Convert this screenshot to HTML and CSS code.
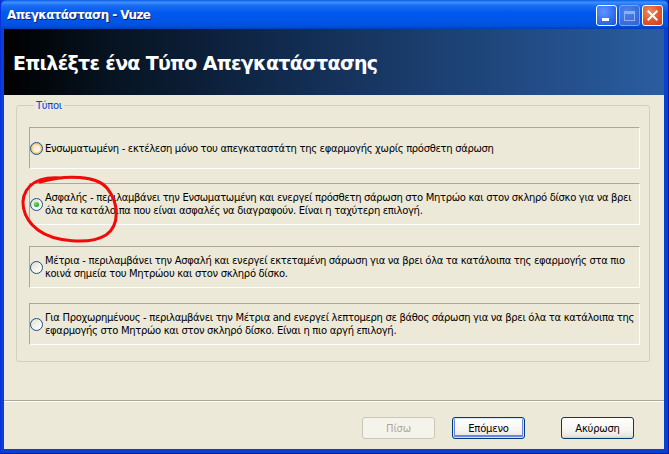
FILE: index.html
```html
<!DOCTYPE html>
<html>
<head>
<meta charset="utf-8">
<link rel="stylesheet" href="styles.css">
</head>
<body>
<div class="window">
  <div class="titlebar">
    <span class="title">Απεγκατάσταση - Vuze</span>
    <div class="tb-buttons">
      <div class="tb-btn tb-min"><span class="min-bar"></span></div>
      <div class="tb-btn tb-max"><span class="max-box"></span></div>
      <div class="tb-btn tb-close">
        <svg width="21" height="21" viewBox="0 0 21 21"><path d="M6 6 L15 15 M15 6 L6 15" stroke="#fff" stroke-width="2.2" stroke-linecap="square"/></svg>
      </div>
    </div>
  </div>
  <div class="client">
    <div class="header">
      <h1 class="header-title">Επιλέξτε ένα Τύπο Απεγκατάστασης</h1>
    </div>
    <div class="content">
      <fieldset class="group">
        <legend class="legend">Τύποι</legend>
        <div class="option opt1">
          <span class="radio hover"></span>
          <span class="opt-text">Ενσωματωμένη - εκτέλεση μόνο του απεγκαταστάτη της εφαρμογής χωρίς πρόσθετη σάρωση</span>
        </div>
        <div class="option opt2">
          <span class="radio checked"><span class="dot"></span></span>
          <span class="opt-text">Ασφαλής - περιλαμβάνει την Ενσωματωμένη και ενεργεί πρόσθετη σάρωση στο Μητρώο και στον σκληρό δίσκο για να βρει<br>όλα τα κατάλοιπα που είναι ασφαλές να διαγραφούν. Είναι η ταχύτερη επιλογή.</span>
        </div>
        <div class="option opt3">
          <span class="radio"></span>
          <span class="opt-text">Μέτρια - περιλαμβάνει την Ασφαλή και ενεργεί εκτεταμένη σάρωση για να βρει όλα τα κατάλοιπα της εφαρμογής στα πιο<br>κοινά σημεία του Μητρώου και στον σκληρό δίσκο.</span>
        </div>
        <div class="option opt4">
          <span class="radio"></span>
          <span class="opt-text">Για Προχωρημένους - περιλαμβάνει την Μέτρια and ενεργεί λεπτομερη σε βάθος σάρωση για να βρει όλα τα κατάλοιπα της<br>εφαρμογής στο Μητρώο και στον σκληρό δίσκο. Είναι η πιο αργή επιλογή.</span>
        </div>
      </fieldset>
      <div class="separator"></div>
      <div class="buttons">
        <button class="btn disabled">Πίσω</button>
        <button class="btn default">Επόμενο</button>
        <button class="btn cancel">Ακύρωση</button>
      </div>
    </div>
  </div>
  <svg class="annotation" width="140" height="80" viewBox="0 0 140 80">
    <path d="M 38 12 C 65 4, 95 6, 105 18 C 117 33, 118 55, 104 65 C 88 75, 52 72, 36 60 C 20 48, 16 28, 28 16 C 36 8, 48 7, 60 8" fill="none" stroke="#f00a0a" stroke-width="3" stroke-linecap="round"/>
  </svg>
</div>
</body>
</html>
```

FILE: styles.css
```css
* { box-sizing: border-box; }
html, body { margin: 0; padding: 0; }
body {
  width: 669px;
  height: 454px;
  overflow: hidden;
  font-family: "DejaVu Sans", Verdana, sans-serif;
  font-size: 10px;
}
.window {
  position: relative;
  width: 669px;
  height: 454px;
  background: #0a3fd0;
  display: flex;
  flex-direction: column;
  border-left: 1px solid #0831d9;
  border-right: 1px solid #001ea0;
  border-bottom: 1px solid #001ea0;
}
.titlebar {
  height: 29px;
  flex: 0 0 29px;
  background: linear-gradient(to bottom, #0a5ee8 0%, #3d8ffc 8%, #1a6bf2 20%, #0058ee 45%, #0055e5 75%, #0050dc 90%, #0040b8 100%);
  display: flex;
  align-items: center;
  justify-content: space-between;
  padding-left: 6px;
  padding-right: 5px;
  border-radius: 6px 6px 0 0;
}
.title {
  color: #fff;
  font-family: "DejaVu Sans", sans-serif;
  font-weight: bold;
  font-size: 12px;
  letter-spacing: -0.6px;
  text-shadow: 1px 1px 0 #0a1e6e;
  margin-top: 1px;
}
.tb-buttons { display: flex; gap: 2px; margin-top: 2px; }
.tb-btn {
  width: 21px;
  height: 21px;
  border: 1px solid #fff;
  border-radius: 3px;
  position: relative;
  display: flex;
  align-items: center;
  justify-content: center;
}
.tb-min { background: radial-gradient(circle at 35% 30%, #5f97ff 0%, #2f6cf0 60%, #1e52d8 100%); }
.tb-max { background: radial-gradient(circle at 35% 30%, #4a84ee 0%, #3a6ee0 60%, #2f60d2 100%); border-color: #7ea3ee; }
.tb-close { background: radial-gradient(circle at 35% 30%, #f08a66 0%, #e2542c 55%, #c8401c 100%); }
.min-bar {
  position: absolute;
  left: 5px;
  bottom: 4px;
  width: 7px;
  height: 3px;
  background: #fff;
}
.max-box {
  width: 11px;
  height: 10px;
  border: 1px solid #8fb0ee;
  border-top-width: 3px;
}
.client {
  flex: 1;
  margin: 0 4px 4px 3px;
  background: #ece9d8;
  display: flex;
  flex-direction: column;
  min-width: 0;
}
.header {
  height: 66px;
  flex: 0 0 66px;
  background: linear-gradient(to right, #000 0%, #06121f 15%, #10284a 40%, #1b3f70 65%, #2a5da0 100%);
  display: flex;
  align-items: center;
  padding-left: 9px;
}
.header-title {
  margin: 0;
  color: #fff;
  font-family: "DejaVu Sans", sans-serif;
  font-weight: bold;
  font-size: 19px;
  letter-spacing: -0.7px;
  margin-top: 1px;
}
.content {
  flex: 1;
  display: flex;
  flex-direction: column;
  padding-top: 4px;
  min-width: 0;
}
.group {
  min-width: 0;
  margin: 0 14px 0 12px;
  padding: 0 9px 17px 12px;
  border: 1px solid #d0d0bf;
  border-radius: 3px;
  height: 263px;
}
.legend {
  color: #0046d5;
  padding: 0 2px;
  margin-left: 5px;
  font-size: 10px;
  line-height: 13px;
  letter-spacing: -0.3px;
}
.option {
  display: flex;
  align-items: center;
  height: 42px;
  border-top: 1px solid #aca899;
  border-left: 1px solid #aca899;
  border-bottom: 1px solid #fff;
  border-right: 1px solid #fff;
  color: #000;
  line-height: 13px;
}
.opt1 { margin-top: 15px; }
.opt2 { margin-top: 14px; }
.opt3 { margin-top: 21px; }
.opt4 { margin-top: 15px; }
.opt-text { margin-left: 2px; white-space: nowrap; letter-spacing: -0.32px; }
.radio {
  flex: 0 0 13px;
  width: 13px;
  height: 13px;
  border-radius: 50%;
  border: 1px solid #1c5180;
  background: linear-gradient(135deg, #dcd9cd 0%, #f3f2ec 50%, #fff 100%);
  display: flex;
  align-items: center;
  justify-content: center;
}
.radio.hover {
  box-shadow: inset 0 0 0 1px #f9c55a, inset 0 0 0 2px #fddb8c;
}
.dot {
  width: 5px;
  height: 5px;
  border-radius: 50%;
  background: radial-gradient(circle at 40% 35%, #7ee17e 0%, #21a121 70%);
}
.separator {
  margin-top: 38px;
  height: 2px;
  border-top: 1px solid #aca899;
  border-bottom: 1px solid #fff;
}
.buttons {
  display: flex;
  justify-content: flex-end;
  padding-right: 30px;
  margin-top: 15px;
  gap: 17px;
}
.btn {
  width: 73px;
  height: 22px;
  font-family: "DejaVu Sans", sans-serif;
  font-size: 10px;
  letter-spacing: -0.2px;
  color: #000;
  border: 1px solid #003c74;
  border-radius: 3px;
  background: linear-gradient(to bottom, #fff 0%, #f6f5f1 60%, #e8e6dc 90%, #d6d0c5 100%);
  padding: 0;
}
.btn.cancel { margin-left: 19px; }
.btn.default {
  box-shadow: inset 0 0 0 1px #cee7ff, inset 0 -1px 0 2px #6982ee;
}
.btn.disabled {
  color: #aca899;
  border-color: #c9c7ba;
  background: #f5f4ea;
}
.annotation {
  position: absolute;
  left: 1px;
  top: 170px;
  pointer-events: none;
}
```
